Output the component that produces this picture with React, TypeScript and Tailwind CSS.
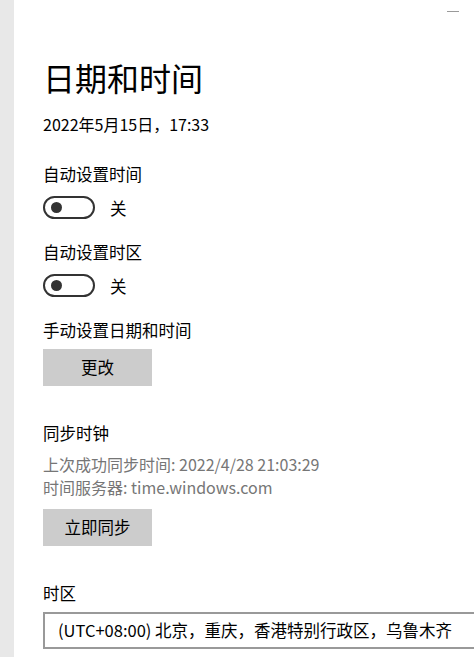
import React from 'react';

const font = { fontFamily: '"Noto Sans CJK SC", "Noto Sans", sans-serif' };

function Toggle({ label }: { label: string }) {
  return (
    <div className="mt-[11px] flex h-[23px] items-center">
      <div className="flex h-[23px] w-[52px] items-center rounded-full border-2 border-[#333333] pl-[6px]">
        <div className="h-[11px] w-[11px] rounded-full bg-[#333333]" />
      </div>
      <span className="ml-[15px] text-[16.5px] leading-[22px] text-black">{label}</span>
    </div>
  );
}

function GrayButton({ text, mt }: { text: string; mt: string }) {
  return (
    <button
      className={`${mt} flex h-[37px] w-[109px] items-center justify-center bg-[#cccccc] text-[16.5px] text-black`}
    >
      {text}
    </button>
  );
}

export default function App() {
  return (
    <div className="relative flex h-[657px] w-[474px] overflow-hidden bg-white" style={font}>
      <div className="w-[14px] shrink-0 bg-[#e8e8e8]" />
      <div className="absolute left-[447px] top-[11px] h-px w-[12px] bg-[#9a9a9a]" />
      <div className="flex min-w-0 flex-1 flex-col pl-[29px] pt-[57px] text-black">
        <h1 className="h-[40px] text-[32px] font-normal leading-[40px] whitespace-nowrap">日期和时间</h1>
        <div className="mt-[17px] text-[16px] leading-[20px] whitespace-nowrap">2022年5月15日，17:33</div>

        <div className="mt-[29px] text-[16.5px] leading-[22px]">自动设置时间</div>
        <Toggle label="关" />

        <div className="mt-[22px] text-[16.5px] leading-[22px]">自动设置时区</div>
        <Toggle label="关" />

        <div className="mt-[22px] text-[16.5px] leading-[22px]">手动设置日期和时间</div>
        <GrayButton text="更改" mt="mt-[8px]" />

        <div className="mt-[36px] text-[16.5px] leading-[22px]">同步时钟</div>
        <div className="mt-[9px] text-[16px] leading-[22.5px] text-[#767676] whitespace-nowrap">
          <div>上次成功同步时间: 2022/4/28 21:03:29</div>
          <div>时间服务器: time.windows.com</div>
        </div>
        <GrayButton text="立即同步" mt="mt-[11px]" />

        <div className="mt-[36px] text-[16.5px] leading-[22px]">时区</div>
        <div className="mt-[8px] flex h-[37px] w-[460px] shrink-0 items-center border-2 border-[#999999] pl-[13px] text-[16.5px] whitespace-nowrap">
          (UTC+08:00) 北京，重庆，香港特别行政区，乌鲁木齐
        </div>
      </div>
    </div>
  );
}
